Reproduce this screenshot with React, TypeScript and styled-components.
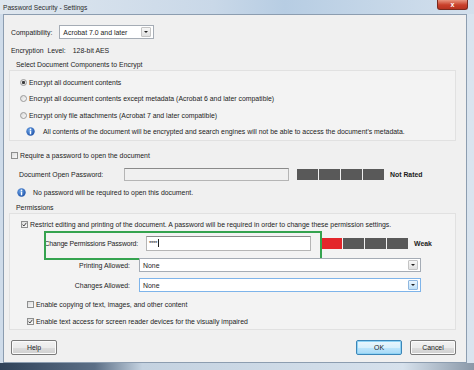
import React from 'react';
import styled, { createGlobalStyle } from 'styled-components';

const GlobalStyle = createGlobalStyle`
  html, body {
    margin: 0;
    padding: 0;
  }
  body {
    font-family: 'Liberation Sans', Arial, sans-serif;
    font-size: 6.9px;
    color: #1c1c1c;
  }
`;

const Window = styled.div`
  width: 474px;
  height: 370px;
  display: flex;
  flex-direction: column;
  background: #cfdcea;
  overflow: hidden;
`;

const TitleBar = styled.div`
  height: 14px;
  display: flex;
  align-items: center;
  padding-left: 3px;
  background: linear-gradient(90deg, #dfe7ef 0%, #c9d8e8 45%, #b7cde3 60%, #d3e0ed 100%);
  font-size: 6.6px;
  color: #2a2a2a;
`;

const CloseButton = styled.div`
  margin-left: auto;
  margin-right: 6px;
  align-self: flex-start;
  width: 29px;
  height: 9px;
  border-radius: 0 0 3px 3px;
  background: linear-gradient(#e8957f, #c9402a 55%, #b73320);
  border: 1px solid #7a2a1e;
  border-top: none;
  color: #fff;
  font-size: 7px;
  font-weight: bold;
  display: flex;
  align-items: center;
  justify-content: center;
  line-height: 1;
`;

const Middle = styled.div`
  flex: 1;
  display: flex;
  padding: 0 7px 0 3px;
  background: linear-gradient(90deg, #cfdcea, #d9e4ef);
`;

const Body = styled.div`
  flex: 1;
  display: flex;
  flex-direction: column;
  background: #f0f0f0;
  border: 1px solid #8c9db0;
  padding: 0 10px 0 5px;
`;

const BottomFrame = styled.div`
  height: 7px;
  background: linear-gradient(90deg, #2f4259 0%, #5c6f86 20%, #c4d2e0 30%, #d6e1ec 85%, #8a98a8 100%);
`;

const Row = styled.div<{ $h?: number; $mt?: number; $pl?: number }>`
  display: flex;
  align-items: center;
  height: ${(p) => p.$h ?? 12}px;
  margin-top: ${(p) => p.$mt ?? 0}px;
  padding-left: ${(p) => p.$pl ?? 0}px;
  white-space: nowrap;
  position: relative;
`;

const Label = styled.span<{ $w?: number; $right?: boolean; $tight?: boolean }>`
  display: inline-block;
  width: ${(p) => (p.$w ? `${p.$w}px` : 'auto')};
  text-align: ${(p) => (p.$right ? 'right' : 'left')};
  letter-spacing: ${(p) => (p.$tight ? '-0.15px' : 'normal')};
  flex-shrink: 0;
`;

const Value = styled.span<{ $ml: number }>`
  margin-left: ${(p) => p.$ml}px;
`;

const GroupTitle = styled.div<{ $mt: number }>`
  height: 10px;
  line-height: 10px;
  margin-top: ${(p) => p.$mt}px;
  padding-left: 7px;
`;

const GroupBox = styled.div<{ $h: number }>`
  height: ${(p) => p.$h}px;
  box-sizing: border-box;
  border: 1px solid #e1e1e1;
  background: #f3f3f3;
  display: flex;
  flex-direction: column;
  padding-top: 3px;
`;

const SelectBox = styled.div<{ $w: number; $h?: number; $ml: number; $active?: boolean }>`
  width: ${(p) => p.$w}px;
  height: ${(p) => p.$h ?? 14}px;
  margin-left: ${(p) => p.$ml}px;
  box-sizing: border-box;
  border: 1px solid ${(p) => (p.$active ? '#7eb4ea' : '#a5acb5')};
  background: #fff;
  display: flex;
  align-items: center;
  padding-left: 3px;
`;

const SelectText = styled.span`
  flex: 1;
`;

const DropButton = styled.div<{ $active?: boolean }>`
  width: 8px;
  height: calc(100% - 4px);
  margin-right: 2px;
  border: 1px solid ${(p) => (p.$active ? '#8fb7df' : '#c4c4c4')};
  border-radius: 1px;
  background: ${(p) =>
    p.$active ? 'linear-gradient(#eaf5fd, #bfe0f7)' : 'linear-gradient(#f7f7f7, #e0e0e0)'};
  display: flex;
  align-items: center;
  justify-content: center;
  &::after {
    content: '';
    border-left: 2px solid transparent;
    border-right: 2px solid transparent;
    border-top: 2.5px solid #222;
  }
`;

const TextInput = styled.div<{ $w: number; $h: number; $ml: number; $disabled?: boolean }>`
  width: ${(p) => p.$w}px;
  height: ${(p) => p.$h}px;
  margin-left: ${(p) => p.$ml}px;
  box-sizing: border-box;
  border: 1px solid #b5b5b5;
  border-top-color: #8a8a8a;
  background: ${(p) => (p.$disabled ? '#f0f0f0' : '#fff')};
  display: flex;
  align-items: center;
  padding-left: 2px;
  font-size: 6px;
  letter-spacing: -0.3px;
`;

const Caret = styled.span`
  display: inline-block;
  width: 1px;
  height: 8px;
  margin-left: 1px;
  background: #222;
`;

const Meter = styled.div<{ $ml: number }>`
  display: flex;
  gap: 1px;
  height: 11px;
  margin-left: ${(p) => p.$ml}px;
`;

const MeterSeg = styled.div<{ $on?: boolean }>`
  width: 21px;
  background: ${(p) => (p.$on ? '#e3262b' : '#595959')};
`;

const Rating = styled.span<{ $ml: number }>`
  margin-left: ${(p) => p.$ml}px;
  font-weight: bold;
`;

const Box = styled.span`
  width: 7px;
  height: 7px;
  box-sizing: border-box;
  border: 1px solid #8e8f8f;
  background: linear-gradient(135deg, #dcdcdc, #fafafa);
  display: inline-flex;
  align-items: center;
  justify-content: center;
  margin-right: 2px;
  flex-shrink: 0;
`;

const Radio = styled.span<{ $on?: boolean }>`
  width: 7px;
  height: 7px;
  box-sizing: border-box;
  border-radius: 50%;
  border: 1px solid #9a9a9a;
  background: ${(p) =>
    p.$on ? 'radial-gradient(circle, #3b3b3b 0 1.3px, #e6e6e6 1.8px)' : 'linear-gradient(135deg, #d8d8d8, #fbfbfb)'};
  margin-right: 2px;
  flex-shrink: 0;
`;

const InfoText = styled.span<{ $ml: number }>`
  margin-left: ${(p) => p.$ml}px;
`;

const Highlight = styled.div`
  position: absolute;
  left: 34px;
  top: -4px;
  width: 278px;
  height: 29px;
  box-sizing: border-box;
  border: 2px solid #35a34f;
  pointer-events: none;
`;

const ButtonBar = styled.div`
  display: flex;
  align-items: center;
  margin-top: 10px;
  padding-left: 2px;
  height: 15px;
`;

const Button = styled.div<{ $default?: boolean; $ml?: number }>`
  width: 46px;
  height: 15px;
  box-sizing: border-box;
  margin-left: ${(p) => (p.$ml !== undefined ? `${p.$ml}px` : '0')};
  border: 1px solid ${(p) => (p.$default ? '#3c86b8' : '#7a7a7a')};
  border-radius: 2px;
  background: ${(p) =>
    p.$default ? 'linear-gradient(#eaf6fd, #d9f0fc 50%, #bee6fd 51%, #a7d9f5)' : 'linear-gradient(#f2f2f2, #ebebeb 50%, #dddddd 51%, #cfcfcf)'};
  box-shadow: inset 0 0 0 1px ${(p) => (p.$default ? '#8fd3f5' : '#fbfbfb')};
  display: flex;
  align-items: center;
  justify-content: center;
`;

const Spacer = styled.div`
  flex: 1;
`;

const InfoIcon = () => (
  <svg width="9" height="9" viewBox="0 0 9 9">
    <defs>
      <radialGradient id="ig" cx="0.4" cy="0.35" r="0.7">
        <stop offset="0" stopColor="#6fa6e8" />
        <stop offset="1" stopColor="#1a4fa6" />
      </radialGradient>
    </defs>
    <circle cx="4.5" cy="4.5" r="4.2" fill="url(#ig)" />
    <circle cx="4.5" cy="2.4" r="0.8" fill="#fff" />
    <rect x="3.8" y="3.7" width="1.4" height="3.6" fill="#fff" />
  </svg>
);

const Check = () => (
  <svg width="5" height="5" viewBox="0 0 5 5">
    <path d="M0.6 2.6 L1.9 4 L4.4 0.8" stroke="#2b2b2b" strokeWidth="0.9" fill="none" />
  </svg>
);

const App: React.FC = () => {
  return (
    <>
      <GlobalStyle />
      <Window>
        <TitleBar>
          Password Security - Settings
          <CloseButton>x</CloseButton>
        </TitleBar>
        <Middle>
          <Body>
            <Row $h={16} $mt={9} $pl={2}>
              <Label>Compatibility:</Label>
              <SelectBox $w={95} $ml={7}>
                <SelectText>Acrobat 7.0 and later</SelectText>
                <DropButton />
              </SelectBox>
            </Row>
            <Row $mt={4} $pl={2}>
              <Label>Encryption&nbsp; Level:</Label>
              <Value $ml={7}>128-bit AES</Value>
            </Row>

            <GroupTitle $mt={4}>Select Document Components to Encrypt</GroupTitle>
            <GroupBox $h={71}>
              <Row $h={17} $pl={10}>
                <Radio $on />
                Encrypt all document contents
              </Row>
              <Row $h={17} $pl={10}>
                <Radio />
                Encrypt all document contents except metadata (Acrobat 6 and later compatible)
              </Row>
              <Row $h={17} $pl={10}>
                <Radio />
                Encrypt only file attachments (Acrobat 7 and later compatible)
              </Row>
              <Row $h={17} $pl={16}>
                <InfoIcon />
                <InfoText $ml={8}>
                  All contents of the document will be encrypted and search engines will not be able to access the document's metadata.
                </InfoText>
              </Row>
            </GroupBox>

            <Row $mt={8} $pl={2}>
              <Box />
              Require a password to open the document
            </Row>
            <Row $h={14} $mt={6} $pl={10}>
              <Label $w={105}>Document Open Password:</Label>
              <TextInput $w={165} $h={13} $ml={0} $disabled />
              <Meter $ml={8}>
                <MeterSeg />
                <MeterSeg />
                <MeterSeg />
                <MeterSeg />
              </Meter>
              <Rating $ml={6}>Not Rated</Rating>
            </Row>
            <Row $mt={5} $pl={8}>
              <InfoIcon />
              <InfoText $ml={7}>No password will be required to open this document.</InfoText>
            </Row>

            <GroupTitle $mt={5}>Permissions</GroupTitle>
            <GroupBox $h={117}>
              <Row $mt={1} $pl={11}>
                <Box>
                  <Check />
                </Box>
                Restrict editing and printing of the document. A password will be required in order to change these permission settings.
              </Row>
              <Row $h={16} $mt={5}>
                <Label $w={128} $right $tight>
                  Change Permissions Password:
                </Label>
                <TextInput $w={165} $h={15} $ml={8}>
                  ****
                  <Caret />
                </TextInput>
                <Meter $ml={10}>
                  <MeterSeg $on />
                  <MeterSeg />
                  <MeterSeg />
                  <MeterSeg />
                </Meter>
                <Rating $ml={6}>Weak</Rating>
                <Highlight />
              </Row>
              <Row $h={14} $mt={7}>
                <Label $w={120} $right>
                  Printing Allowed:
                </Label>
                <SelectBox $w={282} $ml={9}>
                  <SelectText>None</SelectText>
                  <DropButton />
                </SelectBox>
              </Row>
              <Row $h={14} $mt={6}>
                <Label $w={120} $right>
                  Changes Allowed:
                </Label>
                <SelectBox $w={282} $ml={9} $active>
                  <SelectText>None</SelectText>
                  <DropButton $active />
                </SelectBox>
              </Row>
              <Row $mt={6} $pl={17}>
                <Box />
                Enable copying of text, images, and other content
              </Row>
              <Row $mt={5} $pl={17}>
                <Box>
                  <Check />
                </Box>
                Enable text access for screen reader devices for the visually impaired
              </Row>
            </GroupBox>

            <ButtonBar>
              <Button>Help</Button>
              <Spacer />
              <Button $default>OK</Button>
              <Button $ml={8}>Cancel</Button>
            </ButtonBar>
          </Body>
        </Middle>
        <BottomFrame />
      </Window>
    </>
  );
};

export default App;
